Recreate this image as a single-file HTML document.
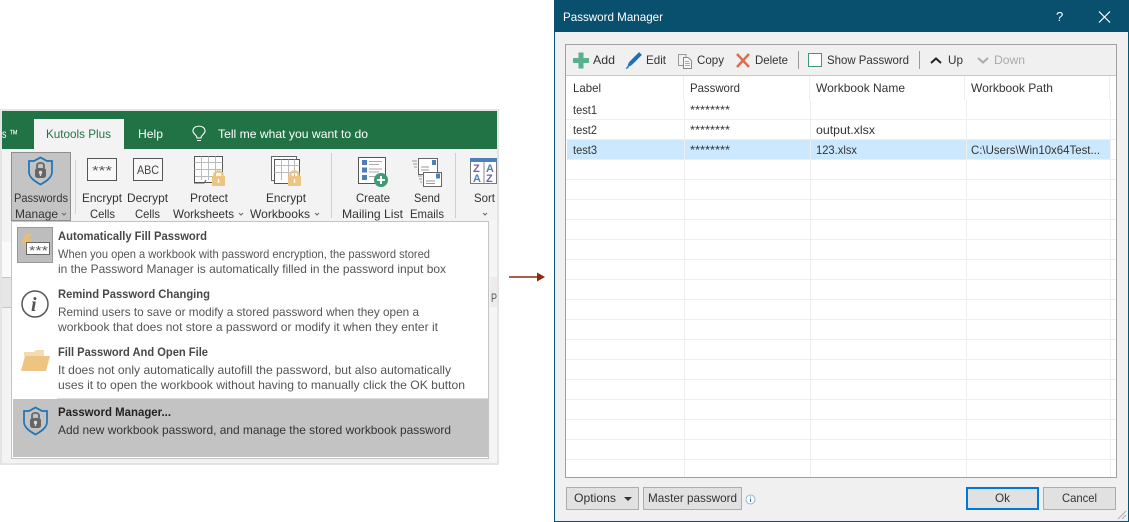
<!DOCTYPE html>
<html><head><meta charset="utf-8"><title>Password Manager</title>
<style>
html,body{margin:0;padding:0;background:#fff;width:1129px;height:522px;overflow:hidden}
svg{display:block}
text{font-family:"Liberation Sans",sans-serif;font-size:12px;fill:#333}
.m{fill:#555}
.b{font-weight:bold;fill:#484848}
.w{fill:#fff}
.g{stroke:#eeeeee;stroke-width:1;fill:none}
</style></head><body>
<svg width="1129" height="522" viewBox="0 0 1129 522" xmlns="http://www.w3.org/2000/svg">
<defs>
<g id="shield"><path d="M1 4 L6 4 L12.500 0.500 L19 4 L24 4 L24 15 C24 21 17 25 12.500 27.500 C8 25 1 21 1 15 Z" fill="none" stroke="#1f73b7" stroke-width="1.700"/><rect x="7" y="11" width="11" height="10" rx="2.500" fill="#666"/><path d="M9 11 V8.500 C9 5 16 5 16 8.500 V11" fill="none" stroke="#666" stroke-width="1.800"/><circle cx="12.500" cy="15.500" r="1.700" fill="#ddd"/><rect x="11.800" y="16" width="1.400" height="3" fill="#ddd"/></g>
<g id="lock"><rect x="0" y="6" width="13" height="10" rx="1" fill="#eec483"/><path d="M2.500 7 V4.500 C2.500 0.500 10.500 0.500 10.500 4.500 V7" fill="none" stroke="#eec483" stroke-width="2.400"/><rect x="5.800" y="9" width="1.400" height="4" fill="#fff"/></g>
</defs>

<!-- LEFT PANEL -->
<rect x="0" y="109" width="499" height="356" fill="#e4e4e4"/>
<rect x="2" y="111" width="495" height="352" fill="#f3f3f3"/>
<rect x="2" y="111" width="495" height="38" fill="#217346"/>
<rect x="34" y="119" width="90" height="30" fill="#f3f3f3"/>
<text class="w" x="2" y="138" textLength="16" lengthAdjust="spacingAndGlyphs">s ™</text>
<text x="46" y="138" textLength="65" lengthAdjust="spacingAndGlyphs" style="fill:#217346">Kutools Plus</text>
<text class="w" x="138" y="138" textLength="25" lengthAdjust="spacingAndGlyphs">Help</text>
<path d="M197 138 C197 135 193 134 193 131 C193 124.500 205 124.500 205 131 C205 134 201 135 201 138 Z M197 140.500 H201" fill="none" stroke="#fff" stroke-width="1.100"/>
<text class="w" x="218" y="138" textLength="150" lengthAdjust="spacingAndGlyphs">Tell me what you want to do</text>

<!-- ribbon: active button -->
<rect x="11.500" y="152.500" width="59" height="68" fill="#c4c4c4" stroke="#8f8f8f"/>
<use href="#shield" x="28" y="157"/>
<text x="14" y="202" textLength="54" lengthAdjust="spacingAndGlyphs">Passwords</text>
<text x="15" y="218" textLength="43" lengthAdjust="spacingAndGlyphs">Manage</text>
<path d="M62 213 l2 2 l2 -2" fill="none" stroke="#666"/>
<path d="M75.500 160 V214" stroke="#d4d4d4"/>

<rect x="87.500" y="158.500" width="29" height="22" fill="#f8f8f8" stroke="#555"/>
<text x="92" y="175" textLength="20" lengthAdjust="spacingAndGlyphs" style="font-size:13px;fill:#555">***</text>
<rect x="133.500" y="158.500" width="29" height="22" fill="#f8f8f8" stroke="#555"/>
<text x="137" y="174" textLength="22" lengthAdjust="spacingAndGlyphs" style="fill:#444">ABC</text>
<text x="82" y="202" textLength="40" lengthAdjust="spacingAndGlyphs">Encrypt</text>
<text x="90" y="218" textLength="25" lengthAdjust="spacingAndGlyphs">Cells</text>
<text x="127" y="202" textLength="41" lengthAdjust="spacingAndGlyphs">Decrypt</text>
<text x="135" y="218" textLength="25" lengthAdjust="spacingAndGlyphs">Cells</text>

<!-- protect worksheets icon -->
<path d="M194.500 156.500 H222.500 V182.500 H194.500 Z" fill="#fff" stroke="#555"/>
<path d="M194.500 162.500 H222.500 M194.500 169.500 H222.500 M194.500 176.500 H222.500 M201.500 156.500 V180 M208.500 156.500 V180 M215.500 156.500 V180" stroke="#bbb" fill="none"/>
<path d="M194.500 176 V183 H204 L206 180" stroke="#555" fill="none"/>
<use href="#lock" x="212" y="170"/>
<text x="190" y="202" textLength="38" lengthAdjust="spacingAndGlyphs">Protect</text>
<text x="173" y="218" textLength="61" lengthAdjust="spacingAndGlyphs">Worksheets</text>
<path d="M239 213 l2 2 l2 -2" fill="none" stroke="#666"/>

<!-- encrypt workbooks icon -->
<path d="M271.500 156.500 H296.500 V180.500 H271.500 Z" fill="#fff" stroke="#666"/>
<path d="M274.500 159.500 H299.500 V179 H290 V183.500 H274.500 Z" fill="#fff" stroke="#555"/>
<path d="M274.500 165.500 H299.500 M274.500 172.500 H299.500 M281.500 159.500 V180 M288.500 159.500 V180 M294.500 159.500 V178" stroke="#bbb" fill="none"/>
<use href="#lock" x="288" y="170"/>
<text x="266" y="202" textLength="40" lengthAdjust="spacingAndGlyphs">Encrypt</text>
<text x="250" y="218" textLength="60" lengthAdjust="spacingAndGlyphs">Workbooks</text>
<path d="M315 213 l2 2 l2 -2" fill="none" stroke="#666"/>
<path d="M331.500 153 V218" stroke="#cfcfcf"/>

<!-- mailing list -->
<rect x="358.500" y="157.500" width="27" height="26" fill="#fff" stroke="#555"/>
<path d="M362 160h5v5h-5z M362 167.500h5v5h-5z M362 175h5v5h-5z" fill="#4d7fb8"/>
<path d="M369 161.500h13 M369 164.500h10 M369 169h13 M369 172h10 M369 176.500h6" stroke="#aaa" fill="none"/>
<circle cx="381" cy="180" r="7" fill="#3e9b73"/>
<path d="M381 176 V184 M377 180 H385" stroke="#fff" stroke-width="2"/>
<text x="356" y="202" textLength="34" lengthAdjust="spacingAndGlyphs">Create</text>
<text x="342" y="218" textLength="61" lengthAdjust="spacingAndGlyphs">Mailing List</text>

<!-- send emails -->
<rect x="418.500" y="158.500" width="19" height="16" fill="#fff" stroke="#666"/>
<rect x="423.500" y="172.500" width="18" height="14" fill="#fff" stroke="#666"/>
<rect x="432" y="160" width="4" height="5" fill="#4d7fb8"/>
<rect x="436" y="173.500" width="4" height="5" fill="#4d7fb8"/>
<path d="M421 167h8 M421 170h8 M426 181h9 M426 183.500h9 M412 161h5 M413 164h4 M414 167h3 M418 176h4 M419 179h3 M420 182h2" stroke="#999" fill="none"/>
<text x="414" y="202" textLength="26" lengthAdjust="spacingAndGlyphs">Send</text>
<text x="410" y="218" textLength="34" lengthAdjust="spacingAndGlyphs">Emails</text>
<path d="M455.500 153 V218" stroke="#cfcfcf"/>

<!-- sort -->
<rect x="470.500" y="160.500" width="26" height="23" fill="#fff" stroke="#777"/>
<rect x="470" y="158" width="27" height="4" fill="#4d7fb8"/>
<path d="M484 162 V184" stroke="#888"/>
<text x="473" y="172" style="font-size:11px;font-weight:bold;fill:#7a5ca3">Z</text>
<text x="473" y="182" style="font-size:11px;font-weight:bold;fill:#4d7fb8">A</text>
<text x="486" y="172" style="font-size:11px;font-weight:bold;fill:#4d7fb8">A</text>
<text x="486" y="182" style="font-size:11px;font-weight:bold;fill:#7a5ca3">Z</text>
<text x="474" y="202" textLength="21" lengthAdjust="spacingAndGlyphs">Sort</text>
<path d="M483 213 l2 2 l2 -2" fill="none" stroke="#666"/>

<!-- sheet strip behind menu -->
<rect x="2" y="221" width="10" height="242" fill="#f3f3f3"/>
<rect x="2" y="242" width="10" height="35" fill="#fafafa"/>
<rect x="2" y="277" width="10" height="30" fill="#e6e6e6"/>
<path d="M2 277.500H12M2 307.500H12" stroke="#c6c6c6"/>
<rect x="490" y="221" width="7" height="242" fill="#f5f5f5"/>
<rect x="490" y="277" width="7" height="30" fill="#ececec"/>
<text x="491" y="302" textLength="6" lengthAdjust="spacingAndGlyphs" style="fill:#555">P</text>

<!-- MENU -->
<rect x="11.500" y="221.500" width="477" height="237" fill="#fff" stroke="#c4c4c4"/>
<rect x="13" y="399" width="475" height="58" fill="#c3c3c3"/>
<path d="M57 398.500 H488" stroke="#ddd"/>

<rect x="17.500" y="227.500" width="35" height="35" fill="#bdbdbd" stroke="#999"/>
<path d="M26 234 L32 233 L29 239 L33 239 L23 251 L26 243 L21 243 Z" fill="#e9bd73"/>
<rect x="26.500" y="242.500" width="23" height="12" fill="#fff" stroke="#666"/>
<text x="29" y="255" textLength="19" lengthAdjust="spacingAndGlyphs" style="font-size:13px;fill:#555">***</text>

<circle cx="35" cy="304" r="13" fill="none" stroke="#555" stroke-width="1.500"/>
<text x="31" y="311" style="font-family:'Liberation Serif',serif;font-size:20px;font-style:italic;font-weight:bold;fill:#555">i</text>

<path d="M24 356 V352 H34 L36 350 H44 V356 Z" fill="#f3dcb0"/>
<path d="M21 371 L25 356 H50 L46 371 Z" fill="#eec483"/>

<use href="#shield" x="23" y="407"/>

<text class="b" x="58" y="240" textLength="149" lengthAdjust="spacingAndGlyphs">Automatically Fill Password</text>
<text class="m" x="58" y="258" textLength="372" lengthAdjust="spacingAndGlyphs">When you open a workbook with password encryption, the password stored</text>
<text class="m" x="58" y="273" textLength="388" lengthAdjust="spacingAndGlyphs">in the Password Manager is automatically filled in the password input box</text>
<text class="b" x="58" y="298" textLength="152" lengthAdjust="spacingAndGlyphs">Remind Password Changing</text>
<text class="m" x="58" y="316" textLength="361" lengthAdjust="spacingAndGlyphs">Remind users to save or modify a stored password when they open a</text>
<text class="m" x="58" y="331" textLength="380" lengthAdjust="spacingAndGlyphs">workbook that does not store a password or modify it when they enter it</text>
<text class="b" x="58" y="356" textLength="150" lengthAdjust="spacingAndGlyphs">Fill Password And Open File</text>
<text class="m" x="58" y="374" textLength="393" lengthAdjust="spacingAndGlyphs">It does not only automatically autofill the password, but also automatically</text>
<text class="m" x="58" y="389" textLength="407" lengthAdjust="spacingAndGlyphs">uses it to open the workbook without having to manually click the OK button</text>
<text class="b" x="58" y="416" textLength="113" lengthAdjust="spacingAndGlyphs" style="fill:#222">Password Manager...</text>
<text x="58" y="434" textLength="393" lengthAdjust="spacingAndGlyphs">Add new workbook password, and manage the stored workbook password</text>

<!-- ARROW -->
<path d="M509 277 H538" stroke="#8a2c10" stroke-width="1.500"/>
<path d="M537 272.500 L545 277 L537 281.500 Z" fill="#8a2c10"/>

<!-- DIALOG -->
<rect x="554.500" y="0.500" width="574" height="521" fill="#f0f0f0" stroke="#0b5274"/>
<rect x="554" y="0" width="575" height="32" fill="#09506f"/>
<text class="w" x="563" y="21" textLength="100" lengthAdjust="spacingAndGlyphs">Password Manager</text>
<text class="w" x="1056" y="21" style="font-size:13px">?</text>
<path d="M1099 11.500 L1110 22.500 M1110 11.500 L1099 22.500" stroke="#fff" stroke-width="1.200"/>

<!-- table -->
<rect x="565.500" y="44.500" width="551" height="433" fill="#fff" stroke="#a0a0a0"/>
<rect x="566" y="45" width="550" height="30" fill="#f0f0f0"/>
<path d="M566 75.500 H1116" stroke="#c8c8c8"/>

<!-- toolbar -->
<path d="M581 52.500 V68.500 M573 60.500 H589" stroke="#58b08c" stroke-width="5"/>
<text x="593" y="64" textLength="22" lengthAdjust="spacingAndGlyphs">Add</text>
<path d="M630.500 63.500 L640.500 53.500" stroke="#1f6fb5" stroke-width="4"/><path d="M629 62 L632 65 L627 67.500 Z" fill="#1f6fb5"/><path d="M626 68.500 L628.500 67" stroke="#1f6fb5" stroke-width="1.300"/>
<text x="646" y="64" textLength="20" lengthAdjust="spacingAndGlyphs">Edit</text>
<path d="M678.500 54.500 H686 V65.500 H678.500 Z" fill="#f0f0f0" stroke="#999"/>
<path d="M683.500 57.500 H688 L691.500 60.500 V68.500 H683.500 Z" fill="#f7f7f7" stroke="#888"/>
<path d="M685 61.500h4M685 63.500h5M685 65.500h5" stroke="#aaa"/>
<text x="697" y="64" textLength="27" lengthAdjust="spacingAndGlyphs">Copy</text>
<path d="M737 54 L749 67 M749 54 L737 67" stroke="#df6a50" stroke-width="2.400"/>
<text x="755" y="64" textLength="33" lengthAdjust="spacingAndGlyphs">Delete</text>
<path d="M798.500 51 V69" stroke="#999"/>
<rect x="808.500" y="53.500" width="13" height="13" fill="#fff" stroke="#3c9a78"/>
<text x="827" y="64" textLength="82" lengthAdjust="spacingAndGlyphs">Show Password</text>
<path d="M919.500 51 V69" stroke="#999"/>
<path d="M931 63 L936 58.500 L941 63" fill="none" stroke="#222" stroke-width="2"/>
<text x="948" y="64" textLength="15" lengthAdjust="spacingAndGlyphs">Up</text>
<path d="M978 58 L983 62.500 L988 58" fill="none" stroke="#aaa" stroke-width="2"/>
<text x="994" y="64" textLength="31" lengthAdjust="spacingAndGlyphs" style="fill:#aaa">Down</text>

<!-- selected row -->
<rect x="567" y="140" width="543" height="19" fill="#cce8ff"/>

<!-- grid -->
<path class="g" d="M566 119.500H1116M566 139.500H1116M566 159.500H1116M566 179.500H1116M566 199.500H1116M566 219.500H1116M566 239.500H1116M566 259.500H1116M566 279.500H1116M566 299.500H1116M566 319.500H1116M566 339.500H1116M566 359.500H1116M566 379.500H1116M566 399.500H1116M566 419.500H1116M566 439.500H1116M566 459.500H1116"/>
<path class="g" d="M684.500 100V477M810.500 100V477M966.500 100V477M1110.500 100V477"/>
<path class="g" d="M683.500 76V100M809.500 76V100M964.500 76V100M1109.500 76V100"/>

<text x="573" y="92" textLength="28" lengthAdjust="spacingAndGlyphs">Label</text>
<text x="690" y="92" textLength="50" lengthAdjust="spacingAndGlyphs">Password</text>
<text x="816" y="92" textLength="89" lengthAdjust="spacingAndGlyphs">Workbook Name</text>
<text x="971" y="92" textLength="82" lengthAdjust="spacingAndGlyphs">Workbook Path</text>

<text x="573" y="114" textLength="24" lengthAdjust="spacingAndGlyphs">test1</text>
<text x="690" y="114" textLength="40" lengthAdjust="spacingAndGlyphs">********</text>
<text x="573" y="134" textLength="24" lengthAdjust="spacingAndGlyphs">test2</text>
<text x="690" y="134" textLength="40" lengthAdjust="spacingAndGlyphs">********</text>
<text x="816" y="134" textLength="59" lengthAdjust="spacingAndGlyphs">output.xlsx</text>
<text x="573" y="154" textLength="24" lengthAdjust="spacingAndGlyphs">test3</text>
<text x="690" y="154" textLength="40" lengthAdjust="spacingAndGlyphs">********</text>
<text x="816" y="154" textLength="41" lengthAdjust="spacingAndGlyphs">123.xlsx</text>
<text x="971" y="154" textLength="129" lengthAdjust="spacingAndGlyphs">C:\Users\Win10x64Test...</text>

<!-- footer buttons -->
<rect x="566.500" y="487.500" width="72" height="22" fill="#e1e1e1" stroke="#adadad"/>
<text x="574" y="502" textLength="42" lengthAdjust="spacingAndGlyphs">Options</text>
<path d="M624 497 H632 L628 501 Z" fill="#333"/>
<rect x="643.500" y="487.500" width="98" height="22" fill="#e1e1e1" stroke="#adadad"/>
<text x="648" y="502" textLength="89" lengthAdjust="spacingAndGlyphs">Master password</text>
<circle cx="750.500" cy="499.500" r="4.500" fill="#fff" stroke="#8fb4e0"/>
<path d="M750.500 498.500 V502 M750.500 496.500 V497.500" stroke="#3f78bd"/>
<rect x="967" y="488" width="71" height="21" fill="#e1e1e1" stroke="#0078d7" stroke-width="2"/>
<text x="995" y="502" textLength="15" lengthAdjust="spacingAndGlyphs">Ok</text>
<rect x="1043.500" y="487.500" width="72" height="22" fill="#e1e1e1" stroke="#adadad"/>
<text x="1062" y="502" textLength="35" lengthAdjust="spacingAndGlyphs">Cancel</text>
<path d="M1118 519 L1126 511 M1122 519 L1126 515" stroke="#aaa"/>
</svg>
</body></html>
